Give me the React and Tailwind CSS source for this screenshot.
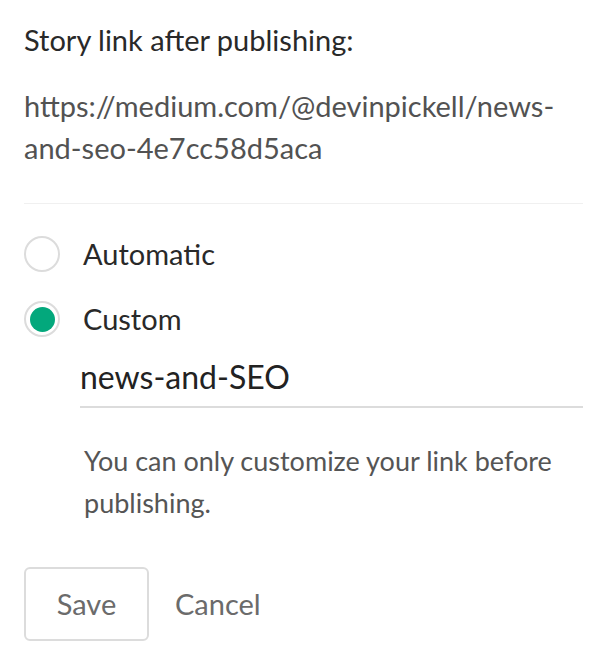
import React, { useState } from 'react';

export default function App() {
  const [mode, setMode] = useState('custom');
  const [slug, setSlug] = useState('news-and-SEO');

  return (
    <div className="min-h-screen w-[606px] bg-white pl-6 pr-[23px] pt-5 font-['Lato',sans-serif]">
      <p className="text-[29px] leading-[40px] text-[#292929]">Story link after publishing:</p>
      <p className="mt-[25px] text-[29px] leading-[42px] text-[#525252] break-words">
        https://medium.com/@devinpickell/news-and-seo-4e7cc58d5aca
      </p>
      <div className="mt-[34px] border-t border-[#f0f0f0]" />

      <div className="mt-8 flex flex-col gap-[29px]">
        <label className="flex items-center gap-[23px] cursor-pointer" onClick={() => setMode('auto')}>
          <span className="w-[36px] h-[36px] rounded-full border-2 border-[#dcdcdc] flex items-center justify-center">
            {mode === 'auto' && <span className="w-[25px] h-[25px] rounded-full bg-[#03a87c]" />}
          </span>
          <span className="text-[29px] leading-[36px] text-[#292929]">Automatic</span>
        </label>
        <label className="flex items-center gap-[23px] cursor-pointer" onClick={() => setMode('custom')}>
          <span className="w-[36px] h-[36px] rounded-full border-2 border-[#dcdcdc] flex items-center justify-center">
            {mode === 'custom' && <span className="w-[25px] h-[25px] rounded-full bg-[#03a87c]" />}
          </span>
          <span className="text-[29px] leading-[36px] text-[#292929]">Custom</span>
        </label>
      </div>

      <div className="ml-14 mt-[17px]">
        <input
          value={slug}
          onChange={e => setSlug(e.target.value)}
          className="block w-full h-[54px] border-b-2 border-[#dcdcdc] pb-[8px] text-[32px] leading-[44px] text-[#222] outline-none"
        />
        <p className="mt-[32px] pl-1 text-[27px] leading-[42px] text-[#555]">
          You can only customize your link before publishing.
        </p>
      </div>

      <div className="mt-[43px] flex items-center gap-[26px]">
        <button className="w-[125px] h-[74px] rounded-md border-2 border-[#dcdcdc] text-[29px] text-[#6b6b6b]">Save</button>
        <button className="text-[29px] text-[#6b6b6b]">Cancel</button>
      </div>
    </div>
  );
}
